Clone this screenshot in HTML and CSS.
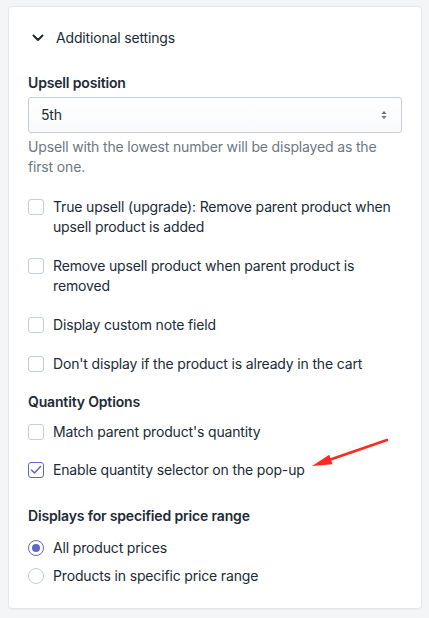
FILE: index.html
```html
<!DOCTYPE html>
<html lang="en">
<head>
<meta charset="utf-8">
<title>Additional settings</title>
<link rel="stylesheet" href="styles.css">
</head>
<body>
<div class="card">
  <div class="toggle">
    <svg class="chev" width="12" height="8" viewBox="0 0 12 8"><path d="M1.5 1.5 L6 6 L10.5 1.5" fill="none" stroke="#212b36" stroke-width="2" stroke-linecap="round" stroke-linejoin="round"/></svg>
    <span>Additional settings</span>
  </div>

  <div class="field">
    <div class="label">Upsell position</div>
    <div class="select">
      <span>5th</span>
      <svg width="8" height="12" viewBox="0 0 8 12"><path d="M1.5 5 L4 2 L6.5 5 Z M1.5 7 L4 10 L6.5 7 Z" fill="#637381"/></svg>
    </div>
    <div class="help">Upsell with the lowest number will be displayed as the first one.</div>
  </div>

  <div class="checks">
    <label class="check"><span class="box"></span><span class="txt">True upsell (upgrade): Remove parent product when upsell product is added</span></label>
    <label class="check"><span class="box"></span><span class="txt">Remove upsell product when parent product is removed</span></label>
    <label class="check"><span class="box"></span><span class="txt">Display custom note field</span></label>
    <label class="check"><span class="box"></span><span class="txt">Don't display if the product is already in the cart</span></label>
  </div>

  <div class="group qty">
    <div class="label">Quantity Options</div>
    <label class="check"><span class="box"></span><span class="txt">Match parent product's quantity</span></label>
    <label class="check checked"><span class="box"><svg width="12" height="10" viewBox="0 0 12 10"><path d="M1.5 5 L4.5 8 L10.5 1.5" fill="none" stroke="#5c6ac4" stroke-width="1.6" stroke-linecap="round" stroke-linejoin="round"/></svg></span><span class="txt">Enable quantity selector on the pop-up</span></label>
  </div>

  <div class="group price">
    <div class="label">Displays for specified price range</div>
    <label class="radio on"><span class="dot"></span><span class="txt">All product prices</span></label>
    <label class="radio"><span class="dot"></span><span class="txt">Products in specific price range</span></label>
  </div>

  <svg class="annot" width="95" height="40" viewBox="0 0 95 40">
    <path d="M88 8 L30 28" stroke="#ff2a1f" stroke-width="2.6" stroke-linecap="round"/>
    <path d="M13 34 L30.3 22.8 L33.5 32.2 Z" fill="#ff2a1f"/>
  </svg>
</div>
</body>
</html>
```

FILE: styles.css
```css
html, body {
  margin: 0;
  padding: 0;
  background: #f4f5f7;
}
body {
  font-family: Inter, "Noto Sans", sans-serif;
  font-size: 14px;
  line-height: 20px;
  letter-spacing: -0.16px;
  color: #212b36;
  padding: 6px 7px 8px 8px;
}
.card {
  position: relative;
  background: #fff;
  border: 1px solid #e4e7eb;
  border-radius: 4px;
  box-shadow: 0 1px 1px rgba(0,0,0,0.04);
  padding: 21px 19px 22px 19px;
}
.toggle {
  display: flex;
  align-items: center;
  gap: 12px;
  padding-left: 4px;
}
.chev { display: block; }
.field { margin-top: 25px; }
.label { font-weight: 600; }
.select {
  margin-top: 4px;
  height: 34px;
  border: 1px solid #c4cdd5;
  border-radius: 3px;
  background: linear-gradient(#fff, #f9fafb);
  display: flex;
  align-items: center;
  justify-content: space-between;
  padding: 0 13px 0 12px;
}
.select svg { display: block; }
.help {
  margin-top: 4px;
  color: #6b7785;
}
.checks {
  margin-top: 20px;
  display: flex;
  flex-direction: column;
  gap: 19px;
}
.check, .radio {
  display: flex;
  align-items: flex-start;
  gap: 9px;
}
.box {
  flex: none;
  width: 14px;
  height: 14px;
  margin-top: 2px;
  border: 1px solid #c4cdd5;
  border-radius: 3px;
  background: #fff;
  display: flex;
  align-items: center;
  justify-content: center;
}
.checked .box { border-color: #5c6ac4; }
.box svg { display: block; }
.group.qty { margin-top: 18px; }
.qty .label { margin-bottom: 10px; }
.qty .check + .check { margin-top: 18px; }
.group.price { margin-top: 26px; }
.price .label { margin-bottom: 12px; }
.price .radio + .radio { margin-top: 8px; }
.dot {
  flex: none;
  width: 14px;
  height: 14px;
  margin-top: 2px;
  border: 1px solid #c4cdd5;
  border-radius: 50%;
  background: #fff;
  position: relative;
}
.radio.on .dot { border-color: #5c6ac4; }
.radio.on .dot::after {
  content: "";
  position: absolute;
  left: 3px;
  top: 3px;
  width: 8px;
  height: 8px;
  border-radius: 50%;
  background: #5c6ac4;
}
.annot {
  position: absolute;
  left: 290px;
  top: 425px;
}
```
